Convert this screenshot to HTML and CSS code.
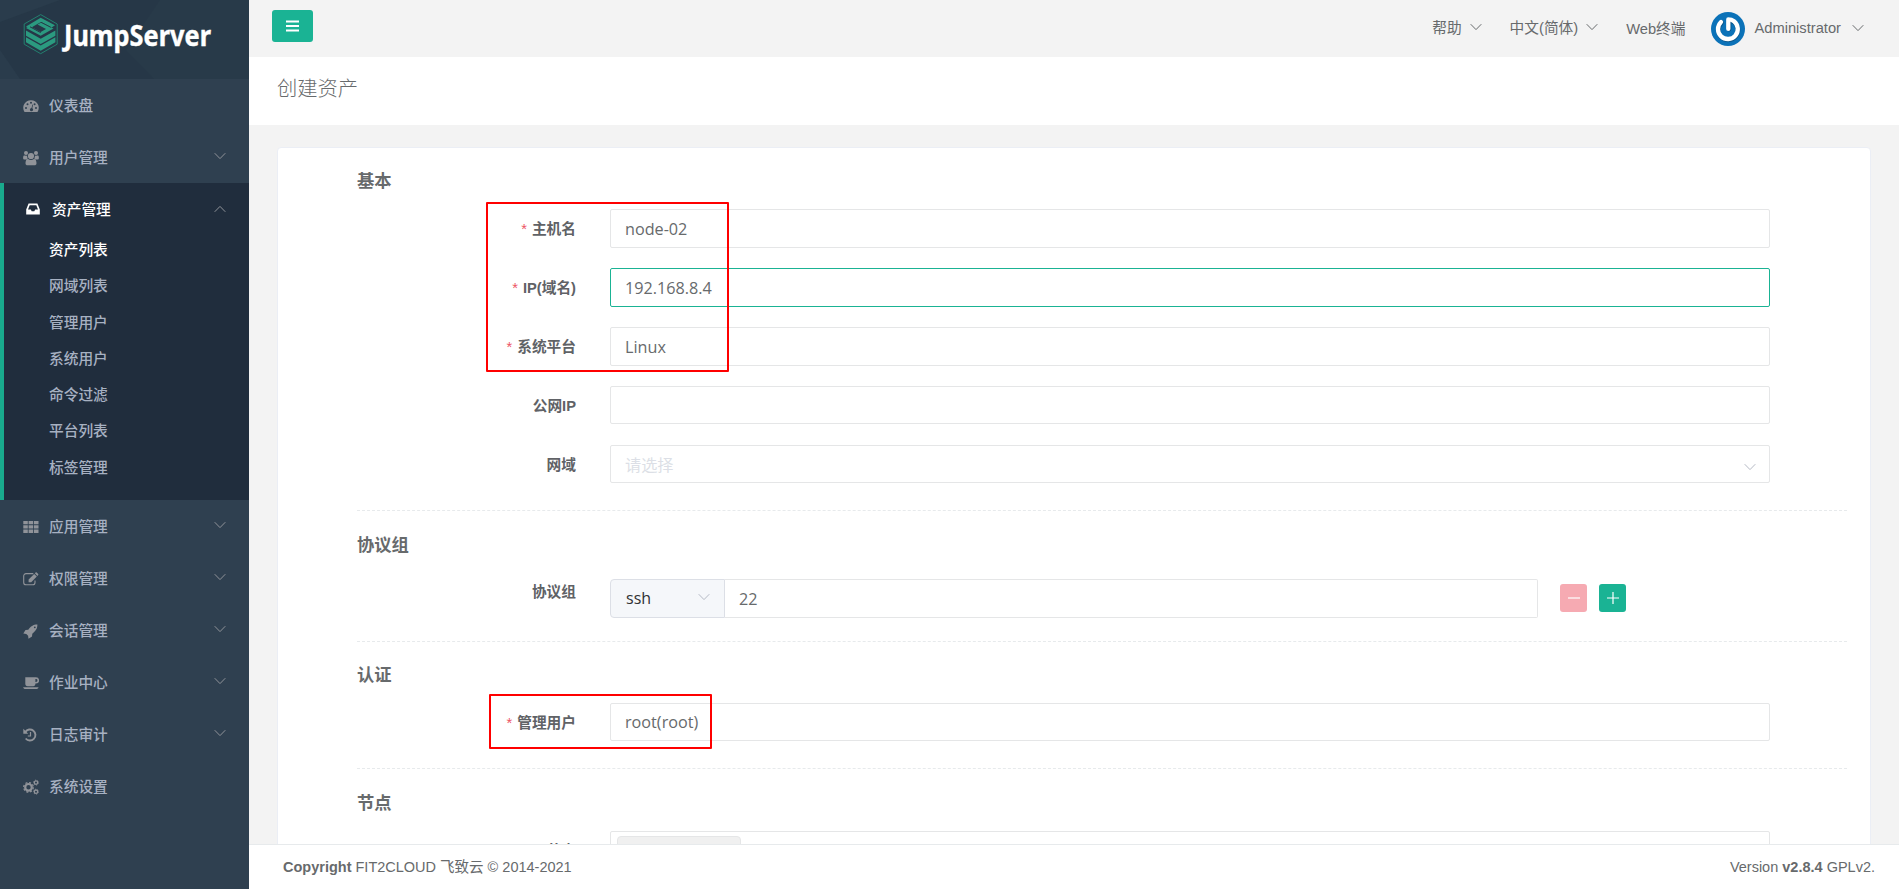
FILE: index.html
```html
<!DOCTYPE html>
<html lang="zh-CN">
  <head>
    <meta charset="UTF-8" />
    <meta name="viewport" content="width=device-width, initial-scale=1.0" />
    <title>创建资产 - JumpServer</title>
    <link rel="stylesheet" href="styles.css">
  </head>
  <body>
    <!-- shared icons -->
    <svg class="sprite" width="0" height="0">
      <symbol id="down" viewBox="0 0 12 12">
        <path d="M.7 3.2 6 8.6l5.3-5.4" fill="none" stroke="currentColor" stroke-width="1" />
      </symbol>
      <symbol id="up" viewBox="0 0 12 12">
        <path d="M.7 8.8 6 3.4l5.3 5.4" fill="none" stroke="currentColor" stroke-width="1" />
      </symbol>
    </svg>

    <div class="app">
      <!-- Sidebar -->
      <aside class="sidebar">
        <div class="logo">
          <svg class="logo-bg" viewBox="0 0 249 79">
            <path d="M0 18 50 0h110l-34 50 28 29H20L0 60z" fill="#263747" />
            <path d="m160 0-34 50 28 29h95V0z" fill="#283a49" />
            <path d="M0 22 60 0H0zM20 79 0 50v29z" fill="#2a3c4c" />
          </svg>
          <svg class="logo-main" viewBox="0 0 249 79">
            <path d="M40.7 14.6 57.2 24v20.2l-16.5 9.5-16.5-9.5V24z" fill="none" stroke="#23806f" stroke-width="1" />
            <g fill="#2b9a80">
              <path d="M26 26.4 40.7 17.8 55 25.2 51.600 27.400 41 22 33.500 26.200 30 28.600z" />
              <path d="M26 28 29.500 26 40.700 32 46 29 37.500 24.600 41.500 22.500 53.500 28.600 40.700 35.800z" />
              <path d="M26 30.500 40.700 38.700 55.400 30.500v5.300L40.700 44 26 35.800z" />
              <path d="M26 37.300 40.700 45.500 55.400 37.300v5L40.700 50.700 26 42.300z" />
            </g>
            <path d="m30 26.800 10.700 5.800M41 22.300l9.800 5" fill="none" stroke="#263747" stroke-width="1" />
            <text class="logo-text" x="64" y="46" textLength="147" lengthAdjust="spacingAndGlyphs">JumpServer</text>
          </svg>
        </div>

        <ul class="menu">
          <li class="menu-item">
            <svg class="icon" viewBox="0 0 16 16"><path fill-rule="evenodd" d="M8 2.2a7.6 7.6 0 0 0-6.5 11.7h13A7.6 7.6 0 0 0 8 2.2M3 9a1 1 0 1 1 0 2 1 1 0 0 1 0-2m1.5-3.7a1 1 0 1 1 0 2 1 1 0 0 1 0-2M8 3.8a1 1 0 1 1 0 2 1 1 0 0 1 0-2m3.6 1.5a1 1 0 1 1 0 2 1 1 0 0 1 0-2M13 9a1 1 0 1 1 0 2 1 1 0 0 1 0-2M9.4 6.6l.7.2-.8 3.4a1.6 1.6 0 1 1-.8-.2z" /></svg>
            <span>仪表盘</span>
          </li>
          <li class="menu-item">
            <svg class="icon" viewBox="0 0 16 16"><circle cx="3" cy="3" r="2" /><circle cx="13" cy="3" r="2" /><circle cx="8" cy="6" r="3.1" /><path d="M4.1 5.4C2.9 6 1.5 5.3.8 5.6 0 6 0 8.9.4 9.3c.7.3 2.2.2 3.1.2.6-.8 1-1 1.3-1.2a4 4 0 0 1-.7-2.9M11.9 5.4c1.2.6 2.6-.1 3.3.2.8.4.8 3.3.4 3.7-.7.3-2.2.2-3.1.2-.6-.8-1-1-1.3-1.2a4 4 0 0 0 .7-2.9M5 9c2 1.4 4 1.400 6 0 1.800 0 2.500 2.200 2.500 4.200 0 1.500-.8 2-2.200 2H4.700c-1.400 0-2.200-.5-2.200-2C2.500 11.200 3.200 9 5 9" /></svg>
            <span>用户管理</span>
            <svg class="arrow"><use href="#down" /></svg>
          </li>
          <li class="menu-open">
            <div class="menu-item">
              <svg class="icon" viewBox="0 0 16 16"><path fill-rule="evenodd" d="M3.6 2.5h8.8L14.800 8.500v5H1.200v-5zM4.700 4.200 3 8.600h2.800l.9 1.700h2.600l.9-1.700H13l-1.700-4.400z" /></svg>
              <span>资产管理</span>
              <svg class="arrow"><use href="#up" /></svg>
            </div>
            <ul class="submenu">
              <li class="active">资产列表</li>
              <li>网域列表</li>
              <li>管理用户</li>
              <li>系统用户</li>
              <li>命令过滤</li>
              <li>平台列表</li>
              <li>标签管理</li>
            </ul>
          </li>
          <li class="menu-item">
            <svg class="icon" viewBox="0 0 16 16"><path d="M.3 2h4.500v3.300H.3zM5.600 2h4.600v3.300H5.600zM11 2h4.500v3.300H11zM.3 6.300h4.500v3.300H.3zM5.600 6.300h4.600v3.300H5.600zM11 6.300h4.500v3.300H11zM.3 10.600h4.500v3.300H.3zM5.600 10.600h4.600v3.300H5.600zM11 10.600h4.500v3.300H11z" /></svg>
            <span>应用管理</span>
            <svg class="arrow"><use href="#down" /></svg>
          </li>
          <li class="menu-item">
            <svg class="icon" viewBox="0 0 16 16"><path d="M10.300 2.600H3A2.300 2.300 0 0 0 .7 4.900v6.600A2.300 2.300 0 0 0 3 13.800h6.700a2.300 2.300 0 0 0 2.300-2.300V9.600" fill="none" stroke="currentColor" stroke-width="1.100" /><path d="M5.600 11.200V8.600l5.600-5.700 2.600 2.600-5.600 5.700zM11.800 2.300l.8-.8q.6-.4 1.100 0l1.500 1.500q.4.500 0 1.100l-.8.800z" /></svg>
            <span>权限管理</span>
            <svg class="arrow"><use href="#down" /></svg>
          </li>
          <li class="menu-item">
            <svg class="icon" viewBox="0 0 16 16"><path fill-rule="evenodd" d="M14.400 1.600C10 1.600 7.700 3.600 5.300 6.700L2.500 7 .3 10.500l3 .4 1.800 1.800.4 3 3.500-2.200.3-2.800c3.100-2.400 5.100-4.700 5.100-9.100M11.800 3.400a.9.900 0 1 1 0 1.800.9.900 0 0 1 0-1.800" /></svg>
            <span>会话管理</span>
            <svg class="arrow"><use href="#down" /></svg>
          </li>
          <li class="menu-item">
            <svg class="icon" viewBox="0 0 16 16"><path fill-rule="evenodd" d="M2.300 2.300H13a3 3 0 0 1 0 6.200h-.6c0 1.800-.8 2.700-2.200 2.700H4.600c-1.500 0-2.300-1-2.300-2.400zM12.400 4v2.900h.6a1.400 1.400 0 0 0 0-2.900zM.2 12.300h15.300c0 1.200-1.200 1.800-2.200 1.800H2.400c-1 0-2.200-.6-2.200-1.800" /></svg>
            <span>作业中心</span>
            <svg class="arrow"><use href="#down" /></svg>
          </li>
          <li class="menu-item">
            <svg class="icon" viewBox="0 0 16 16"><path d="M2.300 5A5.500 5.500 0 1 1 2.700 11.500" fill="none" stroke="currentColor" stroke-width="1.900" /><path d="M.3 1.800v4.900h4.900z" /><path d="M7.500 5v4H4.800" fill="none" stroke="currentColor" stroke-width="1.200" /></svg>
            <span>日志审计</span>
            <svg class="arrow"><use href="#down" /></svg>
          </li>
          <li class="menu-item">
            <svg class="icon" viewBox="0 0 16 16"><g fill="none" stroke="currentColor"><circle cx="5.500" cy="8.300" r="3.300" stroke-width="2.200" /><circle cx="5.500" cy="8.300" r="4.800" stroke-width="1.300" stroke-dasharray="2 1.770" /><circle cx="13" cy="3.600" r="1.700" stroke-width="1.300" /><circle cx="13" cy="3.600" r="2.500" stroke-width=".8" stroke-dasharray="1.200 1.400" /><circle cx="13" cy="12.700" r="1.700" stroke-width="1.300" /><circle cx="13" cy="12.700" r="2.500" stroke-width=".8" stroke-dasharray="1.200 1.400" /></g></svg>
            <span>系统设置</span>
          </li>
        </ul>
      </aside>

      <main class="main">
        <!-- Top bar -->
        <header class="topbar">
          <button class="toggle" aria-label="menu">
            <svg width="13" height="12" viewBox="0 0 13 12"><path d="M0 1.500h13M0 6h13M0 10.500h13" stroke="#fff" stroke-width="1.900" /></svg>
          </button>
          <nav class="nav">
            <span class="nav-item help">帮助 <svg class="arrow"><use href="#down" /></svg></span>
            <span class="nav-item lang">中文(简体) <svg class="arrow"><use href="#down" /></svg></span>
            <span class="nav-item terminal">Web终端</span>
            <span class="nav-item user">
              <svg class="avatar" viewBox="0 0 34 34">
                <circle cx="17" cy="17" r="17" fill="#0b72b8" />
                <path d="M10.600 10.600a9.800 9.800 0 1 0 12.400-.5q-2-1.700-5-1.900V17" fill="none" stroke="#0a5689" stroke-width="4.800" stroke-linecap="round" stroke-linejoin="round" />
                <path d="M10 10a9.900 9.900 0 1 0 13-.7q-2.500-1.900-5.700-1.900v9.500" fill="none" stroke="#fff" stroke-width="4.300" stroke-linecap="round" stroke-linejoin="round" />
              </svg>
              Administrator
              <svg class="arrow"><use href="#down" /></svg>
            </span>
          </nav>
        </header>

        <div class="page-title">创建资产</div>

        <!-- Form -->
        <section class="content">
          <form class="card">
            <div class="group">
              <h3>基本</h3>
              <div class="row">
                <label class="required">主机名</label>
                <div class="field tall">node-02</div>
              </div>
              <div class="row">
                <label class="required">IP(域名)</label>
                <div class="field tall focus">192.168.8.4</div>
              </div>
              <div class="row">
                <label class="required">系统平台</label>
                <div class="field tall">Linux</div>
              </div>
              <div class="row">
                <label>公网IP</label>
                <div class="field"></div>
              </div>
              <div class="row">
                <label>网域</label>
                <div class="field select placeholder">请选择 <svg class="arrow"><use href="#down" /></svg></div>
              </div>
            </div>

            <div class="group protocols">
              <h3>协议组</h3>
              <div class="row">
                <label>协议组</label>
                <div class="protocol">
                  <div class="prepend">ssh <svg class="arrow"><use href="#down" /></svg></div>
                  <div class="field tall port">22</div>
                  <button type="button" class="mini remove" aria-label="remove"><svg viewBox="0 0 12 12"><path d="M0 6h12" /></svg></button>
                  <button type="button" class="mini add" aria-label="add"><svg viewBox="0 0 12 12"><path d="M0 6h12M6 0v12" /></svg></button>
                </div>
              </div>
            </div>

            <div class="group auth">
              <h3>认证</h3>
              <div class="row">
                <label class="required">管理用户</label>
                <div class="field">root(root)</div>
              </div>
            </div>

            <div class="group">
              <h3>节点</h3>
              <div class="row">
                <label>节点</label>
                <div class="field tags"><span class="tag"></span></div>
              </div>
            </div>
          </form>

          <!-- highlight boxes -->
          <div class="mark mark-basic"></div>
          <div class="mark mark-auth"></div>
        </section>

        <footer class="footer">
          <div><strong>Copyright</strong> FIT2CLOUD 飞致云 © 2014-2021</div>
          <div>Version <strong>v2.8.4</strong> GPLv2.</div>
        </footer>
      </main>
    </div>
  </body>
</html>
```
FILE: styles.css
```css
* {
  box-sizing: border-box;
}
body {
  margin: 0;
  font-family: "Liberation Sans", "Noto Sans CJK SC", sans-serif;
  font-size: 14.7px;
  color: #676a6c;
  background: #f3f3f3;
}
ul {
  list-style: none;
  margin: 0;
  padding: 0;
}
.sprite {
  position: absolute;
}
.app {
  display: flex;
  height: 100vh;
  overflow: hidden;
}

/* Sidebar */
.sidebar {
  width: 249px;
  flex: none;
  background: #2f4050;
}
.logo {
  display: grid;
  height: 79px;
  background: #283949;
}
.logo svg {
  grid-area: 1 / 1;
  width: 249px;
  height: 79px;
}
.logo-text {
  font: bold 29px "Noto Sans", sans-serif;
  fill: #fff;
  stroke: #fff;
  stroke-width: 0.4px;
}
.menu {
  color: #a7b1c2;
  font-weight: 500;
}
.menu-item {
  display: flex;
  align-items: center;
  height: 52px;
  padding: 0 23px 2px;
}
.menu-item span {
  margin-left: 10px;
}
.icon {
  width: 16px;
  height: 16px;
  margin-top: 3px;
  fill: currentColor;
  color: #909399;
}
.arrow {
  width: 12px;
  height: 12px;
}
.menu-item .arrow {
  margin-left: auto;
  color: #909399;
}
.menu-open {
  height: 317px;
  border-left: 4px solid #19aa8d;
  background: #202d3d;
}
.menu-open .menu-item {
  padding-left: 21px;
  color: #fff;
}
.menu-open .menu-item span {
  margin-left: 11px;
}
.menu-open .menu-item .arrow {
  margin-top: 2px;
}
.menu-open .icon {
  margin-top: 1px;
  color: #fff;
}
.submenu {
  padding-left: 45px;
  margin-top: -3px;
}
.submenu li {
  height: 36.3px;
  line-height: 36.3px;
}
.submenu .active {
  color: #fff;
}

/* Main area */
.main {
  flex: 1;
  min-width: 0;
  display: flex;
  flex-direction: column;
}
.topbar {
  flex: none;
  display: flex;
  justify-content: space-between;
  height: 57px;
  padding: 10px 35px 0 23px;
}
.toggle {
  display: flex;
  align-items: center;
  justify-content: center;
  width: 41px;
  height: 32px;
  padding: 0;
  border: 0;
  border-radius: 3px;
  background: #1ab394;
}
.nav {
  display: flex;
  height: 35px;
  align-items: center;
}
.nav-item {
  display: flex;
  align-items: center;
  gap: 8px;
}
.help,
.lang {
  margin-top: -2px;
}
.help {
  margin-right: 28px;
}
.lang {
  margin-right: 28px;
}
.terminal {
  margin-right: 26px;
}
.user {
  gap: 9px;
}
.user .arrow {
  margin-left: 2px;
}
.avatar {
  width: 34px;
  height: 34px;
  margin-top: 2px;
}
.page-title {
  flex: none;
  height: 68px;
  padding-left: 28px;
  line-height: 65px;
  font-size: 20.3px;
  font-weight: 300;
  background: #fff;
}
.content {
  position: relative;
  flex: 1;
  min-height: 0;
  overflow: hidden;
  padding: 22px 28px 0;
}
.card {
  height: 800px;
  padding: 21px 23px 0 79px;
  border: 1px solid #ebeef5;
  border-radius: 4px;
  background: #fff;
}
.group + .group {
  margin-top: 6px;
  padding-top: 22px;
  border-top: 1px dashed #e7eaec;
}
.group h3 {
  height: 24px;
  margin: 0 0 16px;
  font-size: 17.3px;
  line-height: 24px;
}
.row {
  display: grid;
  grid-template-columns: 219px 1160px;
  column-gap: 34px;
  height: 59px;
}
.row label {
  line-height: 40px;
  text-align: right;
  font-weight: bold;
  color: #606266;
}
.required::before {
  content: "*";
  margin-right: 5px;
  font-weight: normal;
  color: #ed5565;
}
.field {
  display: flex;
  align-items: center;
  height: 38px;
  padding: 0 14px;
  border: 1px solid #e5e6e7;
  border-radius: 2px;
  background: #fff;
  font: 16.200px "Open Sans", "Noto Sans CJK SC", sans-serif;
}
.tall {
  height: 39px;
}
.focus {
  border-color: #1ab394;
}
.placeholder {
  color: #dcdfe6;
}
.select .arrow {
  margin-left: auto;
  margin-right: -1px;
  margin-top: 5px;
  color: #b4b9c4;
}
.group.protocols h3 {
  margin-bottom: 22px;
}
.protocols .row label {
  line-height: 26px;
}
.protocol {
  display: flex;
  height: 39px;
  align-items: center;
}
.prepend {
  display: flex;
  align-items: center;
  justify-content: space-between;
  width: 115px;
  height: 39px;
  padding: 0 14px 2px 15px;
  border: 1px solid #dcdfe6;
  border-radius: 4px 0 0 4px;
  background: #f5f7fa;
  color: #303133;
  font: 16px "Open Sans", sans-serif;
}
.prepend .arrow {
  margin-top: -1px;
  color: #b4b9c4;
}
.port {
  width: 813px;
  border-left: 0;
  border-radius: 0 2px 2px 0;
}
.mini {
  display: flex;
  align-items: center;
  justify-content: center;
  width: 27px;
  height: 28px;
  margin-bottom: 1px;
  padding: 0;
  border: 0;
  border-radius: 3px;
}
.mini svg {
  width: 12px;
  height: 12px;
  stroke: #fff;
  stroke-width: 1.2;
}
.remove {
  margin-left: 22px;
  background: #f6aab2;
}
.add {
  margin-left: 12px;
  background: #1ab394;
}
.group.auth {
  margin-top: 3px;
  padding-top: 21px;
}
.tags {
  padding: 4px 6px;
}
.tag {
  width: 124px;
  height: 28px;
  border: 1px solid #e5e6e7;
  border-radius: 4px;
  background: #f0f0f0;
}

/* Red highlight boxes over the form */
.mark {
  position: absolute;
  border: 2px solid #f00;
  border-radius: 1px;
}
.mark-basic {
  left: 237px;
  top: 77px;
  width: 243px;
  height: 170px;
}
.mark-auth {
  left: 240px;
  top: 569px;
  width: 223px;
  height: 55px;
}
.footer {
  flex: none;
  display: flex;
  justify-content: space-between;
  height: 45px;
  padding: 0 24px 0 34px;
  font-size: 14.5px;
  line-height: 44px;
  border-top: 1px solid #e7eaec;
  background: #fff;
}
```
